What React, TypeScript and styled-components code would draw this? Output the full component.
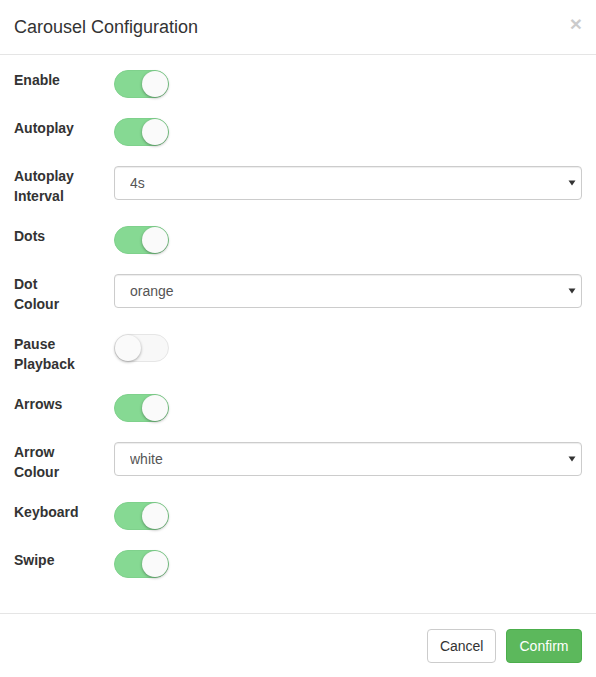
import React, { useState } from "react";
import styled, { createGlobalStyle } from "styled-components";

const Global = createGlobalStyle`
  html, body {
    margin: 0;
    padding: 0;
    background: #fff;
  }
  body {
    font-family: "Liberation Sans", Arial, Helvetica, sans-serif;
    font-size: 14px;
    line-height: 20px;
    color: #333;
  }
  * { box-sizing: border-box; }
`;

const Modal = styled.div`
  width: 596px;
  background: #fff;
`;

const Header = styled.div`
  display: flex;
  align-items: flex-start;
  justify-content: space-between;
  padding: 14px 14px 14px 14px;
  border-bottom: 1px solid #e5e5e5;
`;

const Title = styled.h4`
  margin: 0;
  font-size: 18px;
  font-weight: 400;
  line-height: 26px;
  color: #333;
`;

const Close = styled.button`
  border: 0;
  background: none;
  padding: 0;
  margin-top: 0;
  font-family: "Liberation Sans", Arial, sans-serif;
  font-size: 21px;
  font-weight: 700;
  line-height: 20px;
  color: #000;
  opacity: 0.2;
  cursor: pointer;
`;

const Body = styled.div`
  padding: 15px 15px 15px 14px;
`;

const Row = styled.div`
  display: grid;
  grid-template-columns: 100px 1fr;
  align-items: start;
  margin-bottom: 20px;
`;

const Label = styled.label`
  font-weight: 700;
  line-height: 20px;
  width: 70px;
  color: #333;
`;

const Track = styled.button<{ $on: boolean }>`
  position: relative;
  width: 55px;
  height: 28px;
  padding: 0;
  border-radius: 14px;
  border: 1px solid ${({ $on }) => ($on ? "#7fd18c" : "#e6e6e6")};
  background: ${({ $on }) => ($on ? "#86d993" : "#f8f8f8")};
  cursor: pointer;
  transition: background 0.2s;
`;

const Knob = styled.span<{ $on: boolean }>`
  position: absolute;
  top: 0;
  left: ${({ $on }) => ($on ? "27px" : "0")};
  width: 26px;
  height: 26px;
  border-radius: 50%;
  background: #fafafa;
  box-shadow: 0 1px 3px rgba(0, 0, 0, 0.35);
  transition: left 0.2s;
`;

const SelectWrap = styled.div`
  position: relative;
  width: 468px;
`;

const Select = styled.select`
  display: block;
  width: 100%;
  height: 34px;
  padding: 6px 30px 6px 15px;
  border: 1px solid #ccc;
  border-radius: 4px;
  background: #fff;
  font-family: "Liberation Sans", Arial, sans-serif;
  font-size: 14px;
  color: #555;
  appearance: none;
  -webkit-appearance: none;
  box-shadow: inset 0 1px 1px rgba(0, 0, 0, 0.075);
  outline: none;
`;

const Caret = styled.svg`
  position: absolute;
  right: 6px;
  top: 14px;
  pointer-events: none;
`;

const Footer = styled.div`
  display: flex;
  justify-content: flex-end;
  gap: 10px;
  padding: 15px 14px 14px;
  border-top: 1px solid #e5e5e5;
`;

const Button = styled.button<{ $primary?: boolean }>`
  height: 34px;
  padding: 6px ${({ $primary }) => ($primary ? "12.5px" : "11.5px")};
  border-radius: 4px;
  font-family: "Liberation Sans", Arial, sans-serif;
  font-size: 14px;
  line-height: 20px;
  cursor: pointer;
  border: 1px solid ${({ $primary }) => ($primary ? "#4cae4c" : "#ccc")};
  background: ${({ $primary }) => ($primary ? "#5cb85c" : "#fff")};
  color: ${({ $primary }) => ($primary ? "#fff" : "#333")};
`;

function Toggle({ initial }: { initial: boolean }) {
  const [on, setOn] = useState(initial);
  return (
    <Track $on={on} onClick={() => setOn(!on)} aria-pressed={on}>
      <Knob $on={on} />
    </Track>
  );
}

function Dropdown({ value, options }: { value: string; options: string[] }) {
  const [v, setV] = useState(value);
  return (
    <SelectWrap>
      <Select value={v} onChange={(e) => setV(e.target.value)}>
        {options.map((o) => (
          <option key={o}>{o}</option>
        ))}
      </Select>
      <Caret width="8" height="6" viewBox="0 0 8 6">
        <path d="M0.5 0.5 L7.5 0.5 L4 5.5 Z" fill="#333" />
      </Caret>
    </SelectWrap>
  );
}

type Field =
  | { label: string; kind: "toggle"; on: boolean }
  | { label: string; kind: "select"; value: string; options: string[] };

const colours = ["white", "black", "orange", "red", "blue", "green"];

const fields: Field[] = [
  { label: "Enable", kind: "toggle", on: true },
  { label: "Autoplay", kind: "toggle", on: true },
  { label: "Autoplay Interval", kind: "select", value: "4s", options: ["2s", "3s", "4s", "5s", "6s"] },
  { label: "Dots", kind: "toggle", on: true },
  { label: "Dot Colour", kind: "select", value: "orange", options: colours },
  { label: "Pause Playback", kind: "toggle", on: false },
  { label: "Arrows", kind: "toggle", on: true },
  { label: "Arrow Colour", kind: "select", value: "white", options: colours },
  { label: "Keyboard", kind: "toggle", on: true },
  { label: "Swipe", kind: "toggle", on: true },
];

export default function App() {
  return (
    <>
      <Global />
      <Modal>
        <Header>
          <Title>Carousel Configuration</Title>
          <Close aria-label="Close">×</Close>
        </Header>
        <Body>
          {fields.map((f) => (
            <Row key={f.label}>
              <Label>{f.label}</Label>
              {f.kind === "toggle" ? (
                <Toggle initial={f.on} />
              ) : (
                <Dropdown value={f.value} options={f.options} />
              )}
            </Row>
          ))}
        </Body>
        <Footer>
          <Button>Cancel</Button>
          <Button $primary>Confirm</Button>
        </Footer>
      </Modal>
    </>
  );
}
